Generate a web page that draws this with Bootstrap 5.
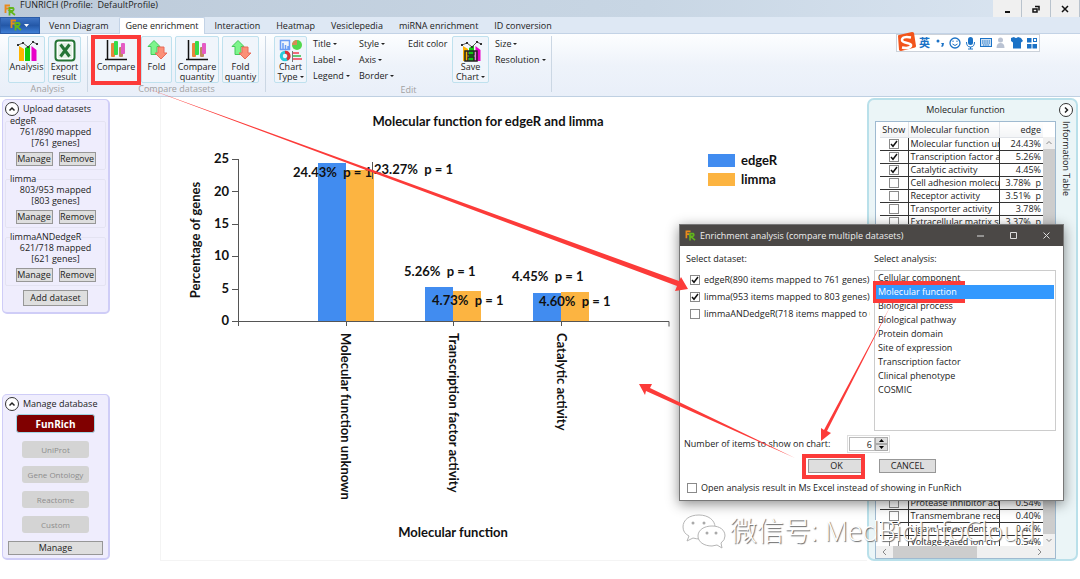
<!DOCTYPE html>
<html lang="en">
<head>
<meta charset="utf-8">
<meta name="viewport" content="width=device-width, initial-scale=1">
<title>FunRich</title>
<link href="https://cdn.jsdelivr.net/npm/bootstrap@5.3.0/dist/css/bootstrap.min.css" rel="stylesheet">
<style>
:root{--ui:"Open Sans","Noto Sans",sans-serif;--edge:#b9e0ea}
body{font-family:var(--ui);font-size:9px;line-height:12px;color:#222;background:#fff;overflow:hidden}
button,input{font:inherit;color:inherit}
.stage{position:relative;min-height:100vh}
.title-strip{height:17px;background:linear-gradient(90deg,#bccad9,#c8d6e4 60%,#dbe6f2)}
.title-text{white-space:pre;line-height:10px}
.title-strip .win-btn{width:29px;height:17px;border:0;background:#f0f0f0;border-right:1px solid #b9c3cd;padding:0}
.tab-strip{height:17px;background:#dee8f4;border-bottom:1px solid #c3d3e6}
.file-btn{width:40px;height:17px;border:1px solid #2b5ca8;background:linear-gradient(#3f74c4,#2458a8 50%,#3f7fd6);padding:0;margin-right:1px}
.tab-strip .tab-link{padding:2px 8px;height:17px;line-height:14px;color:#222;text-decoration:none;white-space:nowrap}
.tab-strip .tab-link.on{background:#fff;border:1px solid #c3d3e6;border-bottom:0;border-radius:2px 2px 0 0;padding:1px 6px;margin:0 1px 0 2px}
.ribbon{height:63px;background:linear-gradient(#fdfeff,#eef3fa 50%,#e9eff9);border-bottom:1px solid #bfd0e2;padding:2px 0 0 8px}
.r-group{border-right:1px solid #cbd7e4;height:56px}
.r-group .g-name{color:#a2a2a2;line-height:11px;text-align:center}
.gap-s{gap:3px}
.cmp-set{padding-left:6px}
.r-btn{height:47px;border:1px solid #bfe1ee;border-radius:2px;background:#f0f5fb;padding:1px 0 0;line-height:10px;display:flex;flex-direction:column;align-items:center;white-space:nowrap}
.r-btn svg{width:24px;height:24px;flex:none}
.w31{width:31px}.w33{width:33px}.w37{width:37px}.w44{width:44px}
.drops{padding-left:6px}
.r-drop{border:0;background:none;padding:0;text-align:left;height:16px;line-height:14px;white-space:nowrap}
.caret{display:inline-block;border:2px solid transparent;border-top-color:#222;border-bottom:0;margin-left:2px;vertical-align:2px}
.ime{position:absolute;left:896px;top:34px;width:144px;height:18px;background:#fff;border:1px solid #ccd2da}
.side-col{width:110px;padding:2px 0 1px 2px}
.side-panel{border:1px solid #cfcdf7;border-width:1px 2px 2px 1px;border-radius:5px;background:#efedfd;padding:2px;width:108px}
.round-btn{width:14px;height:14px;border:1px solid #333;border-radius:50%;background:#fff;padding:0;display:flex;align-items:center;justify-content:center;flex:none}
.ds{border:1px solid #e4e3f2;border-radius:2px;height:54px;margin-bottom:4px;text-align:center;line-height:11px}
.ds legend{font-size:9px;line-height:10px;width:auto;float:none;margin:0 0 0 4px;padding:0;text-align:left}
.ds-acts{gap:6px}
.flat{border:1px solid #979797;background:#dedede;padding:0 1px;line-height:12px;height:14px}
.ds .flat{width:37px;padding:0}
.add{width:65px;height:16px}
.db-list{padding:3px 3px 1px}
.db{width:67px;height:17px;border:0;border-radius:3px;background:#d4d4d4;color:#8d8d8d;padding:0;font-size:8px}
.db.main-db{width:79px;height:19px;background:#800000;color:#fff;font-weight:700;border:1px solid #9fd6e4;font-size:10px;line-height:14px}
.chart{font-family:Lato,"Open Sans",sans-serif;font-weight:700;fill:#111}
.chart-box{border-left:1px solid #f4f4f4;border-bottom:1px solid #f4f4f4;margin-left:50px}
.info{width:211px;margin:1px 2px 0 0;border:2px solid var(--edge);border-radius:7px;background:#ebf5f7;padding:3px 3px 0 6px}
.info-name{height:18px;line-height:14px}
.grid-box{width:181px;height:438px;border:1px solid #9fbad0;background:#fff;overflow:hidden}
.grid-table{width:163px;margin-left:4px;table-layout:fixed;border-collapse:collapse;color:#222}
.grid-table th,.grid-table td{padding:0 0 0 2px;height:13px;line-height:12px;white-space:nowrap;overflow:hidden;border:1px solid #333;border-width:0 1px 1px 1px}
.grid-table th{height:15px;line-height:13px;font-weight:400;border-color:#e0e3e8;background:linear-gradient(#fff,#f3f4f6)}
.grid-table td:first-child,.grid-table th:first-child{text-align:center;border-left:0;padding:0}
.grid-table td:last-child,.grid-table th:last-child{border-right:0;text-align:right;padding:0 2px 0 0}
.sbar{background:#cdcdcd;width:12px}
.tick{appearance:none;width:10px;height:10px;border:1px solid #8a8a8a;background:#fff;margin:0;flex:none;display:block}
td .tick{margin:0 auto}
.tick:checked{background:#fff url("data:image/svg+xml,%3Csvg xmlns='http://www.w3.org/2000/svg' viewBox='0 0 8 8'%3E%3Cpath d='M1 4l2 2.3L7 1' fill='none' stroke='%23111' stroke-width='1.5'/%3E%3C/svg%3E")}
.vert{writing-mode:vertical-rl;line-height:12px}
.dialog-win{position:absolute;left:679px;top:224px;width:385px;height:277px;background:#fff;border:1px solid #777;box-shadow:0 3px 12px rgba(0,0,0,.45)}
.dialog-title{height:21px;background:#4b4846;color:#eee;padding-left:5px}
.dialog-title button{border:0;background:none;width:33px;padding:0;color:#eee}
.dialog-cols{padding-top:7px}
.pick-row{height:13px}
.pick{height:161px;border:1px solid #ccc;padding:0 1px;margin-top:5px}
.pick .list-group-item{border:0;padding:0 2px;height:14px;line-height:14px;font-size:9px;color:#222;border-radius:0;background:none}
.pick .list-group-item.active{background:#3399fe;color:#fff;margin:0}
.spin{border:1px solid #ddd;height:18px;width:43px;padding:1px}
.spin input{width:26px;height:14px;border:1px solid #bbb;text-align:right;padding:0 2px;appearance:textfield;line-height:10px}
.spin input::-webkit-inner-spin-button{display:none}
.spin button{border:1px solid #aaa;background:#ddd;height:7px;padding:0;width:13px;display:flex;align-items:center;justify-content:center}
.d-btn{width:57px}
.ok-row{padding-left:128px;gap:14px;margin-top:6px}
.xl-row{margin:9px 0 0 7px}
.marks{position:absolute;left:0;top:0;pointer-events:none}
.stamp{position:absolute;left:682px;top:512px;font-family:"Open Sans","Noto Sans CJK SC",sans-serif;font-weight:300;font-size:27px;line-height:36px;color:#fff;text-shadow:1px 1px 1px #666;white-space:nowrap;pointer-events:none}
</style>
</head>
<body>
<svg width="0" height="0" class="position-absolute" aria-hidden="true">
 <symbol id="fr" viewBox="0 0 12 12"><g fill="none" stroke-width="1.8"><path d="M1.500 9V1.500H6M1 4.500h4" stroke="#e98a1c"/><path d="M5.500 11.500V4h3.500q1.500 1.500-.5 3H6l5 4" stroke="#62b61c"/></g></symbol>
 <symbol id="bars" viewBox="0 0 24 24"><path d="M4 8l5 3v12H4z" fill="#ffb400"/><path d="M10 10l5-3v16h-5z" fill="#12c912"/><path d="M16.500 8l5 4v11h-5z" fill="#e800c8"/><path d="M3 7l5-2 5 4 5-5 4 2" fill="none" stroke="#555"/><path d="M2 6h2v2H2zM7 4h2v2H7zM12 8h2v2h-2zM17 3h2v2h-2zM21 5h2v2h-2z" fill="#333"/></symbol>
 <symbol id="cmp" viewBox="0 0 24 24"><path d="M3.500 2v19.500H23M1 21.500h3" fill="none" stroke="#111" stroke-width="1.500"/><rect x="7" y="5" width="4" height="14" rx="1" fill="#e8843a"/><rect x="10" y="3" width="4" height="14" rx="1" fill="#35dc4a"/><rect x="15" y="9" width="4" height="10" rx="1" fill="#bf8a5f"/><rect x="17" y="5" width="4" height="11" rx="1" fill="#e45bc4"/></symbol>
 <symbol id="fold" viewBox="0 0 24 24"><path d="M9 2.500l6 6h-3v8H6v-8H3z" fill="#7df58c" stroke="#45c95b"/><path d="M13 9h6v6h3l-6 6-6-6h3z" fill="#fb9078" stroke="#ea6b58"/></symbol>
 <symbol id="excel" viewBox="0 0 24 24"><rect x="2.500" y="2.500" width="19" height="20" rx="3" fill="#fff" stroke="#267535" stroke-width="2"/><rect x="5" y="5" width="14" height="15" fill="#e6f2e6"/><path d="M7.500 6.500l9 12M16.500 6.500l-9 12" stroke="#267535" stroke-width="3"/></symbol>
 <symbol id="ctype" viewBox="0 0 24 24"><path d="M1.500 2.500h9v9h-9zM4 11V5M6.500 11V7M9 11V8" fill="none" stroke="#6a9df5" stroke-width="1.500"/><circle cx="18" cy="7" r="5" fill="#52d84d"/><path d="M18 7V2a5 5 0 0 0-5 5z" fill="#d98a55"/><circle cx="6" cy="18" r="3.700" fill="none" stroke="#2bcbd8" stroke-width="3"/><path d="M6 14.300a3.700 3.700 0 0 1 2 7" fill="none" stroke="#d33" stroke-width="3"/><path d="M13.500 13v11" stroke="#777"/><path d="M14 15h6M14 21h9" stroke="#ef6b7b" stroke-width="2"/><path d="M14 18h8" stroke="#63c878" stroke-width="2"/></symbol>
</svg>
<div class="stage">
<header>
 <div class="title-strip d-flex align-items-start">
  <svg class="ms-1 mt-1" width="12" height="12"><use href="#fr"/></svg>
  <span class="title-text ms-1 flex-grow-1">FUNRICH (Profile:  DefaultProfile)</span>
  <button class="win-btn" aria-label="Minimise"><svg width="10" height="10"><path d="M3 8h5" stroke="#111" stroke-width="2"/></svg></button>
  <button class="win-btn" aria-label="Restore"><svg width="10" height="10"><path d="M4 2.500h4v4M2 5h4v3H2z" fill="none" stroke="#111" stroke-width="1.500"/></svg></button>
  <button class="win-btn" aria-label="Close"><svg width="10" height="10"><path d="M2 2l6 6M8 2L2 8" stroke="#111" stroke-width="1.500"/></svg></button>
 </div>
 <nav class="tab-strip d-flex">
  <button class="file-btn" aria-label="File"><svg width="34" height="13" class="d-block mx-auto"><use href="#fr" x="7" width="12" height="12"/><path d="M21 5h5l-2.500 3z" fill="#fff"/></svg></button>
  <a class="tab-link" href="#">Venn Diagram</a>
  <a class="tab-link on" href="#">Gene enrichment</a>
  <a class="tab-link" href="#">Interaction</a>
  <a class="tab-link" href="#">Heatmap</a>
  <a class="tab-link" href="#">Vesiclepedia</a>
  <a class="tab-link" href="#">miRNA enrichment</a>
  <a class="tab-link" href="#">ID conversion</a>
 </nav>
 <div class="ribbon d-flex">
  <div class="r-group" style="width:80px">
   <div class="d-flex gap-s"><button class="r-btn w37"><svg><use href="#bars"/></svg>Analysis</button><button class="r-btn w33"><svg><use href="#excel"/></svg>Export<br>result</button></div>
   <div class="g-name">Analysis</div>
  </div>
  <div class="r-group" style="width:178px">
   <div class="cmp-set d-flex gap-s"><button class="r-btn w44"><svg><use href="#cmp"/></svg>Compare</button><button class="r-btn w31"><svg><use href="#fold"/></svg>Fold</button><button class="r-btn w44"><svg><use href="#cmp"/></svg>Compare<br>quantity</button><button class="r-btn w37"><svg><use href="#fold"/></svg>Fold<br>quantiy</button></div>
   <div class="g-name">Compare datasets</div>
  </div>
  <div class="r-group" style="width:286px">
   <div class="d-flex">
    <button class="r-btn w33 ms-2"><svg><use href="#ctype"/></svg><span>Chart</span><span>Type<i class="caret"></i></span></button>
    <div class="drops d-flex flex-column" style="width:52px"><button class="r-drop">Title<i class="caret"></i></button><button class="r-drop">Label<i class="caret"></i></button><button class="r-drop">Legend<i class="caret"></i></button></div>
    <div class="d-flex flex-column" style="width:49px"><button class="r-drop">Style<i class="caret"></i></button><button class="r-drop">Axis<i class="caret"></i></button><button class="r-drop">Border<i class="caret"></i></button></div>
    <div style="width:44px"><button class="r-drop">Edit color</button></div>
    <button class="r-btn w37"><svg><use href="#bars"/><path d="M6 13h12v10H6zM9 13v4h6v-4M9 23v-4h6v4" fill="none" stroke="#222" stroke-width="1.500"/></svg><span>Save</span><span>Chart<i class="caret"></i></span></button>
    <div class="drops d-flex flex-column"><button class="r-drop">Size<i class="caret"></i></button><button class="r-drop">Resolution<i class="caret"></i></button></div>
   </div>
   <div class="g-name">Edit</div>
  </div>
 </div>
</header>

<main class="d-flex">
 <aside class="side-col d-flex flex-column justify-content-between">
  <section class="side-panel">
   <div class="d-flex align-items-center gap-1"><button class="round-btn" aria-label="Collapse"><svg width="8" height="8"><path d="M1.500 5.500L4 3l2.500 2.500" fill="none" stroke="#222" stroke-width="1.500"/></svg></button>Upload datasets</div>
   <fieldset class="ds"><legend>edgeR</legend><div>761/890 mapped</div><div>[761 genes]</div><div class="ds-acts d-flex justify-content-center pt-1"><button class="flat">Manage</button><button class="flat">Remove</button></div></fieldset>
   <fieldset class="ds"><legend>limma</legend><div>803/953 mapped</div><div>[803 genes]</div><div class="ds-acts d-flex justify-content-center pt-1"><button class="flat">Manage</button><button class="flat">Remove</button></div></fieldset>
   <fieldset class="ds"><legend>limmaANDedgeR</legend><div>621/718 mapped</div><div>[621 genes]</div><div class="ds-acts d-flex justify-content-center pt-1"><button class="flat">Manage</button><button class="flat">Remove</button></div></fieldset>
   <div class="text-center pb-1"><button class="flat add">Add dataset</button></div>
  </section>
  <section class="side-panel">
   <div class="d-flex align-items-center gap-1"><button class="round-btn" aria-label="Collapse"><svg width="8" height="8"><path d="M1.500 5.500L4 3l2.500 2.500" fill="none" stroke="#222" stroke-width="1.500"/></svg></button>Manage database</div>
   <div class="db-list d-flex flex-column align-items-center gap-2">
    <button class="db main-db">FunRich</button><button class="db">UniProt</button><button class="db">Gene Ontology</button><button class="db">Reactome</button><button class="db">Custom</button>
    <button class="flat w-100">Manage</button>
   </div>
  </section>
 </aside>
 <section class="flex-grow-1">
  <div class="chart-box">
  <svg class="chart d-block" width="100%" height="463" font-size="13">
   <text x="327" y="29" text-anchor="middle">Molecular function for edgeR and limma</text>
   <g fill="#418cf0"><rect x="157" y="66" width="28" height="158"/><rect x="264" y="190" width="28" height="34"/><rect x="372" y="196" width="28" height="28"/><rect x="547" y="57" width="27" height="13"/></g>
   <g fill="#fcb441"><rect x="185" y="73" width="28" height="151"/><rect x="292" y="194" width="28" height="30"/><rect x="400" y="195" width="28" height="29"/><rect x="547" y="76" width="27" height="13"/></g>
   <path d="M77.500 62v167M71 62.500h7M71 94.500h7M71 127.500h7M71 159.500h7M71 192.500h7M71 224.500h437v5M185.500 224v5M292.500 224v5M400.500 224v5M211.500 65v17" fill="none" stroke="#555"/>
   <g text-anchor="end"><text x="68" y="66">25</text><text x="68" y="99">20</text><text x="68" y="131">15</text><text x="68" y="163">10</text><text x="68" y="196">5</text><text x="68" y="228">0</text></g>
   <text x="132" y="80">24.43%&nbsp; p = 1</text><text x="213" y="77">23.27%&nbsp; p = 1</text><text x="243" y="179">5.26%&nbsp; p = 1</text><text x="271" y="208">4.73%&nbsp; p = 1</text><text x="351" y="184">4.45%&nbsp; p = 1</text><text x="378" y="209">4.60%&nbsp; p = 1</text>
   <text transform="translate(39 143) rotate(-90)" text-anchor="middle">Percentage of genes</text>
   <text transform="translate(180 236) rotate(90)">Molecular function unknown</text>
   <text transform="translate(288 236) rotate(90)">Transcription factor activity</text>
   <text transform="translate(396 236) rotate(90)">Catalytic activity</text>
   <text x="292" y="440" text-anchor="middle">Molecular function</text>
   <text x="580" y="68">edgeR</text><text x="580" y="87">limma</text>
  </svg>
  </div>
 </section>
 <aside class="info d-flex">
  <div>
   <div class="info-name text-center">Molecular function</div>
   <div class="grid-box d-flex flex-column">
    <div class="d-flex flex-grow-1 overflow-hidden">
     <table class="grid-table"><colgroup><col style="width:28px"><col style="width:91px"><col></colgroup>
      <thead><tr><th>Show</th><th>Molecular function</th><th>edge</th></tr></thead>
      <tbody>
      <tr><td><input class="tick" type="checkbox" checked aria-label="Show"></td><td>Molecular function un</td><td>24.43%</td></tr>
      <tr><td><input class="tick" type="checkbox" checked aria-label="Show"></td><td>Transcription factor a</td><td>5.26%</td></tr>
      <tr><td><input class="tick" type="checkbox" checked aria-label="Show"></td><td>Catalytic activity</td><td>4.45%</td></tr>
      <tr><td><input class="tick" type="checkbox" aria-label="Show"></td><td>Cell adhesion molecu</td><td>3.78% &nbsp;p</td></tr>
      <tr><td><input class="tick" type="checkbox" aria-label="Show"></td><td>Receptor activity</td><td>3.51% &nbsp;p</td></tr>
      <tr><td><input class="tick" type="checkbox" aria-label="Show"></td><td>Transporter activity</td><td>3.78%</td></tr>
      <tr><td><input class="tick" type="checkbox" aria-label="Show"></td><td>Extracellular matrix st</td><td>3.37% &nbsp;p</td></tr>
      <tr style="height:268px"><td></td><td></td><td></td></tr>
      <tr><td><input class="tick" type="checkbox" aria-label="Show"></td><td>Protease inhibitor act</td><td>0.54%</td></tr>
      <tr><td><input class="tick" type="checkbox" aria-label="Show"></td><td>Transmembrane rece</td><td>0.40%</td></tr>
      <tr><td><input class="tick" type="checkbox" aria-label="Show"></td><td>Ligand-dependent nu</td><td>0.40%</td></tr>
      <tr><td><input class="tick" type="checkbox" aria-label="Show"></td><td>Voltage-gated ion ch</td><td>0.54%</td></tr>
      </tbody></table>
     <div class="d-flex flex-column" style="padding-top:15px"><svg width="12" height="12" style="background:#f0f0f0"><path d="M3.500 7L6 4.500 8.500 7" fill="none" stroke="#888"/></svg><div class="sbar flex-grow-1"></div><svg width="12" height="12" style="background:#f0f0f0"><path d="M3.500 5L6 7.500 8.500 5" fill="none" stroke="#888"/></svg></div>
    </div>
    <div class="d-flex" style="height:12px;background:#f0f0f0"><svg width="17" height="12"><path d="M10 3L7 6l3 3" fill="none" stroke="#888"/></svg><div style="width:84px;background:#cdcdcd"></div><svg class="ms-auto me-2" width="17" height="12"><path d="M8 3l3 3-3 3" fill="none" stroke="#888"/></svg></div>
   </div>
  </div>
  <div class="ms-auto d-flex flex-column align-items-center"><button class="round-btn" aria-label="Expand"><svg width="8" height="8"><path d="M3 1.500L5.500 4 3 6.500" fill="none" stroke="#222" stroke-width="1.500"/></svg></button><span class="vert pt-1">Information Table</span></div>
 </aside>
</main>

<div class="ime d-flex align-items-center">
 <svg width="142" height="16" overflow="visible" role="img" aria-label="Input method bar">
  <path d="M1 1q0-1 1-1l13-3q1.500 0 2 1l2 13q0 1-1 1.500l-14 3.500q-1.500 0-2-1z" fill="#f2541b"/><path d="M14 2.500Q5 1 5 5q0 2 5 3t4 3q-2 3-9 1.500" fill="none" stroke="#fff" stroke-width="2.500"/>
  <text x="22" y="12" font-family="Noto Sans CJK SC, sans-serif" font-weight="700" font-size="11" fill="#1b72c6">英</text>
  <g fill="#1b72c6"><circle cx="41" cy="6" r="1.500"/><path d="M44 8h3q0 3-2 4l-1-1q1-.5 1-1.500z"/><rect x="71" y="2" width="5" height="8" rx="2.500"/><path d="M115 3l3-1q2 2 4 0l3 1 2 3-2 1.500v6h-8V7.500l-2-1.500z" transform="translate(-1 0)"/><path d="M130 3h4.500v4.500h-4.500zM130 9h4.500v4.500h-4.500zM135.500 9h4.500v4.500h-4.500z"/></g>
  <g fill="none" stroke="#1b72c6"><circle cx="58" cy="8" r="5" stroke-width="1.300"/><path d="M55.500 9q2.500 3 5 0M56 5.500v1.500M60 5.500v1.500M69.500 7q0 5 4 5t4-5M73.500 12v2M71 14h5"/><rect x="83.500" y="3.500" width="11" height="8" fill="#cfe2f5"/><path d="M85 6h8M85 8h8M86 10h6" stroke-dasharray="1.500 .7"/><rect x="136.500" y="3.500" width="3" height="3"/></g>
  <g fill="#bac3d3"><circle cx="103.500" cy="5" r="2.500"/><path d="M99.500 13q0-5 4-5t4 5z"/></g>
 </svg>
</div>

<section class="dialog-win" role="dialog" aria-label="Enrichment analysis">
 <div class="dialog-title d-flex align-items-center gap-1"><svg width="11" height="11"><use href="#fr"/></svg><span class="flex-grow-1">Enrichment analysis (compare multiple datasets)</span><div class="d-flex"><button aria-label="Minimise"><svg width="10" height="10"><path d="M1 5h7" stroke="#ddd"/></svg></button><button aria-label="Maximise"><svg width="10" height="10"><path d="M1.500 1.500h6v6h-6z" fill="none" stroke="#ddd"/></svg></button><button aria-label="Close"><svg width="10" height="10"><path d="M1.500 1.500l6 6M7.500 1.500l-6 6" stroke="#ddd"/></svg></button></div></div>
 <div class="dialog-cols d-flex">
  <div class="overflow-hidden me-1" style="width:184px;margin-left:6px">
   <div class="mb-2">Select dataset:</div>
   <div class="d-flex flex-column gap-1 ms-1 text-nowrap">
    <label class="d-flex align-items-center gap-1 pick-row"><input class="tick" type="checkbox" checked>edgeR(890 items mapped to 761 genes)</label>
    <label class="d-flex align-items-center gap-1 pick-row"><input class="tick" type="checkbox" checked>limma(953 items mapped to 803 genes)</label>
    <label class="d-flex align-items-center gap-1 pick-row"><input class="tick" type="checkbox">limmaANDedgeR(718 items mapped to 621 genes)</label>
   </div>
  </div>
  <div style="width:182px">
   <div>Select analysis:</div>
   <div class="pick list-group rounded-0">
    <button class="list-group-item list-group-item-action">Cellular component</button><button class="list-group-item list-group-item-action active">Molecular function</button><button class="list-group-item list-group-item-action">Biological process</button><button class="list-group-item list-group-item-action">Biological pathway</button><button class="list-group-item list-group-item-action">Protein domain</button><button class="list-group-item list-group-item-action">Site of expression</button><button class="list-group-item list-group-item-action">Transcription factor</button><button class="list-group-item list-group-item-action">Clinical phenotype</button><button class="list-group-item list-group-item-action">COSMIC</button>
   </div>
  </div>
 </div>
 <div class="d-flex align-items-center mt-1 ms-1"><label for="n" style="width:163px">Number of items to show on chart:</label>
  <div class="spin d-flex"><input id="n" type="number" value="6"><div class="d-flex flex-column"><button aria-label="More"><svg width="5" height="3" class="d-block"><path d="M0 3l2.500-3L5 3z"/></svg></button><button aria-label="Fewer"><svg width="5" height="3" class="d-block"><path d="M0 0l2.500 3L5 0z"/></svg></button></div></div></div>
 <div class="d-flex ok-row"><button class="flat d-btn">OK</button><button class="flat d-btn">CANCEL</button></div>
 <label class="xl-row d-flex align-items-center gap-1 text-nowrap"><input class="tick" type="checkbox">Open analysis result in Ms Excel instead of showing in FunRich</label>
</section>

<div class="stamp d-flex align-items-center gap-1"><svg width="44" height="38"><g fill="#fff" stroke="#b5b5b5"><path d="M17 3C7 3 1 8 1 15q0 6 6 9l-2 5 6-3q3 1 8 1C29 27 33 21 33 15 33 8 26 3 17 3z"/><path d="M30 14c-8 0-14 4-14 10s6 10 14 10l5-1 5 3-1-5q4-3 4-7c0-6-5-10-13-10z"/></g><g fill="#aaa"><circle cx="11" cy="11" r="1.500"/><circle cx="22" cy="11" r="1.500"/><circle cx="25" cy="21" r="1.500"/><circle cx="34" cy="21" r="1.500"/></g></svg><span>微信号: MedBioInfoCloud</span></div>

<svg class="marks" width="1080" height="579" aria-hidden="true">
 <g fill="none" stroke="#fc3b39" stroke-width="4"><rect x="93" y="37" width="46" height="46"/><rect x="875" y="283" width="88" height="18"/><rect x="804" y="456" width="59" height="21"/></g>
 <g fill="#fc3b39"><path d="M138 85L679 281 681 277 688 289 675 291 677 286z"/><path d="M891 305L827 431 831 433 821 441 821 428 824 430z"/><path d="M795 458L646 391 645 395 639 384 652 384 650 388z"/></g>
</svg>
</div>
<script src="https://cdn.jsdelivr.net/npm/bootstrap@5.3.0/dist/js/bootstrap.bundle.min.js"></script>
</body>
</html>
